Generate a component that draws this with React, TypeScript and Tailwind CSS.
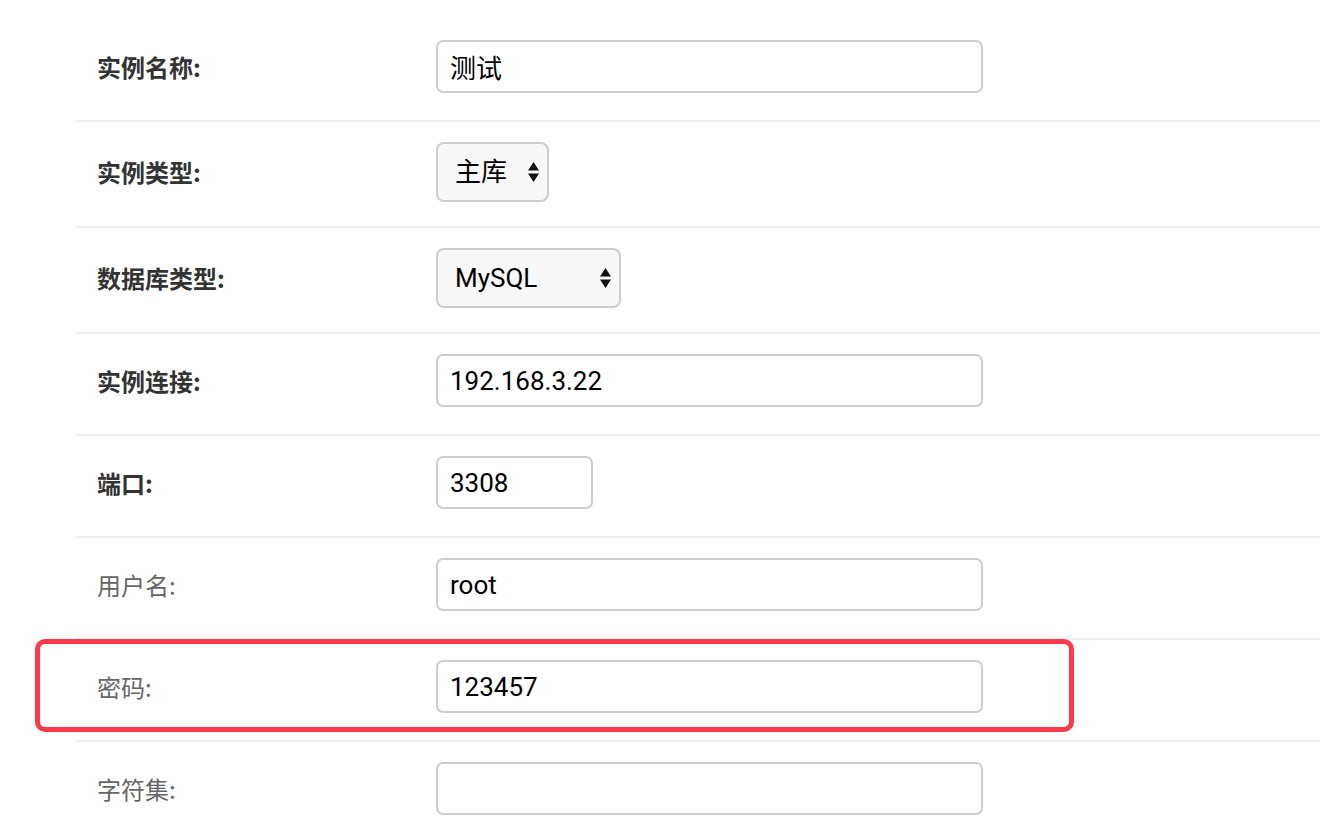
import React from "react";

type Row = {
  label: string;
  strong: boolean;
  kind: "input" | "select";
  value: string;
  width: string;
};

const rows: Row[] = [
  { label: "实例名称:", strong: true, kind: "input", value: "测试", width: "w-[547px]" },
  { label: "实例类型:", strong: true, kind: "select", value: "主库", width: "w-[113px]" },
  { label: "数据库类型:", strong: true, kind: "select", value: "MySQL", width: "w-[185px]" },
  { label: "实例连接:", strong: true, kind: "input", value: "192.168.3.22", width: "w-[547px]" },
  { label: "端口:", strong: true, kind: "input", value: "3308", width: "w-[157px]" },
  { label: "用户名:", strong: false, kind: "input", value: "root", width: "w-[547px]" },
  { label: "密码:", strong: false, kind: "input", value: "123457", width: "w-[547px]" },
  { label: "字符集:", strong: false, kind: "input", value: "", width: "w-[547px]" },
];

function SortArrows() {
  return (
    <svg width="13" height="22" viewBox="0 0 13 22" className="shrink-0">
      <path d="M6.5 1 L12 9.5 L1 9.5 Z" fill="#111" />
      <path d="M6.5 21 L12 12.5 L1 12.5 Z" fill="#111" />
    </svg>
  );
}

function Field({ row }: { row: Row }) {
  if (row.kind === "select") {
    return (
      <div className={`${row.width} h-[60px] flex items-center justify-between pl-[17px] pr-[7px] border-2 border-[#cdcdcd] rounded-[8px] bg-[#f7f7f7] text-[26px] text-black`}>
        <span>{row.value}</span>
        <SortArrows />
      </div>
    );
  }
  return (
    <input
      readOnly
      value={row.value}
      className={`${row.width} h-[53px] px-3 border-2 border-[#cdcdcd] rounded-[7px] bg-white text-[26px] text-black outline-none`}
      style={{ fontFamily: "Roboto, 'Noto Sans CJK SC', sans-serif" }}
    />
  );
}

export default function App() {
  return (
    <div className="w-[1320px] h-[824px] overflow-hidden bg-white pl-[76px]" style={{ fontFamily: "Roboto, 'Noto Sans CJK SC', sans-serif" }}>
      {rows.map((row, idx) => {
        const first = idx === 0;
        const isSelect = row.kind === "select";
        const height = first ? "h-[122px] pt-[40px]" : isSelect ? "h-[106px] pt-[20px]" : "h-[102px] pt-[20px]";
        const highlighted = row.label === "密码:";
        return (
          <div key={idx} className={`relative ${height} border-b-2 border-[#efefef]`}>
            <div className="flex items-center">
              <div
                className={`w-[360px] pl-[21px] text-[24px] ${row.strong ? "font-bold text-[#333]" : "font-normal text-[#666]"}`}
                style={{ fontFamily: "'Noto Sans CJK SC', sans-serif" }}
              >
                {row.label}
              </div>
              <Field row={row} />
            </div>
            {highlighted && (
              <div className="absolute left-[-41px] top-[-1px] w-[1039px] h-[93px] border-[5px] border-[#fd3a4b] rounded-[10px] pointer-events-none" />
            )}
          </div>
        );
      })}
    </div>
  );
}
